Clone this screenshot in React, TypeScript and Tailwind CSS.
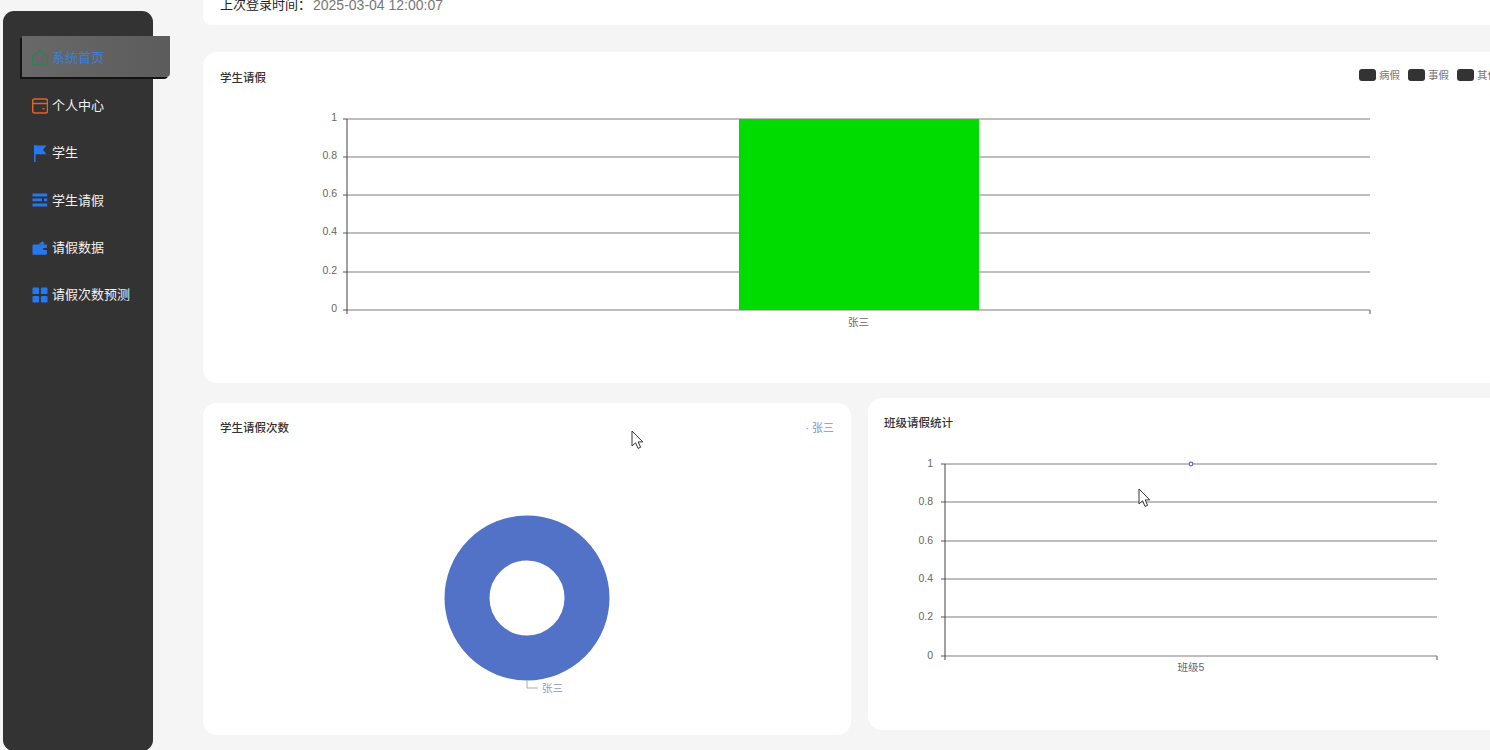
const ticks = ['1', '0.8', '0.6', '0.4', '0.2', '0']

function HouseIcon() {
  return (
    <svg width="16" height="16" viewBox="0 0 16 16" fill="none" stroke="#23884f" strokeWidth="1.2">
      <path d="M8 .8 15.2 6.2V15.2H.8V6.2Z" strokeLinejoin="round" />
      <path d="M5.5 11.5h5" />
    </svg>
  )
}

function CardIcon() {
  return (
    <svg width="16" height="16" viewBox="0 0 16 16" fill="none" stroke="#e0622c" strokeWidth="1.5">
      <rect x=".7" y="1" width="14.8" height="14" rx="2" />
      <path d="M.7 5.4h14.8M10.5 10.8h2" />
    </svg>
  )
}

function FlagIcon() {
  return (
    <svg width="16" height="17" viewBox="0 0 16 17" fill="#2678ee">
      <path d="M2 0h1.6v17H2Z" />
      <path d="M3 .5h11.5L11 4.8l3.5 4.4H3Z" />
    </svg>
  )
}

function ListIcon() {
  return (
    <svg width="16" height="14" viewBox="0 0 16 14" fill="#2678ee">
      <path d="M.5.5h14.7v3H.5ZM.5 5.6h9.5v2.6H.5ZM12 5.6h3.2v2.6H12ZM.5 10.5h14.7V13.5H.5Z" />
    </svg>
  )
}

function WalletIcon() {
  return (
    <svg width="16" height="16" viewBox="0 0 16 16" fill="#2678ee">
      <path d="M6 4.5 11 1l1.6 3.5Z" />
      <path d="M1.5 4.4h13.4v3.6h-3a1 1 0 0 0 0 2h3v3.8a1 1 0 0 1-1 1H1.5a1 1 0 0 1-1-1V5.4a1 1 0 0 1 1-1Z" />
    </svg>
  )
}

function GridIcon() {
  return (
    <svg width="16" height="16" viewBox="0 0 16 16" fill="#2678ee">
      <rect x=".5" y=".5" width="6.6" height="6.6" rx="1.2" />
      <rect x="8.9" y=".5" width="6.6" height="6.6" rx="1.2" />
      <rect x=".5" y="8.9" width="6.6" height="6.6" rx="1.2" />
      <rect x="8.9" y="8.9" width="6.6" height="6.6" rx="1.2" />
    </svg>
  )
}

const menu = [
  { label: '系统首页', icon: <HouseIcon />, active: true },
  { label: '个人中心', icon: <CardIcon /> },
  { label: '学生', icon: <FlagIcon /> },
  { label: '学生请假', icon: <ListIcon /> },
  { label: '请假数据', icon: <WalletIcon /> },
  { label: '请假次数预测', icon: <GridIcon /> },
]

function Cursor({ className }: { className: string }) {
  return (
    <svg className={className} width="13" height="20" viewBox="0 0 13 20" fill="#fff" stroke="#333" strokeWidth="1">
      <path d="M1 1v15l3.6-3.2 2.4 5.6 2.6-1.1-2.4-5.4h4.6Z" strokeLinejoin="round" />
    </svg>
  )
}

// Axis grid shared by the two cartesian charts, coordinates are in the svg's own space
function Axes({
  x0,
  x1,
  ys,
  label,
  labelGap,
  labelDy,
  nameDy,
}: {
  x0: number
  x1: number
  ys: number[]
  label: string
  labelGap: number
  labelDy: number
  nameDy: number
}) {
  const bottom = ys[ys.length - 1]
  const mid = (x0 + x1) / 2
  return (
    <g>
      {ys.map((y, i) => (
        <g key={y}>
          <line x1={x0} x2={x1} y1={y} y2={y} stroke="#a8a8a8" strokeWidth="1.5" />
          <line x1={x0 - 4} x2={x0} y1={y} y2={y} stroke="#555" />
          <text x={x0 - labelGap} y={y + labelDy} textAnchor="end" fontSize="10.5" fill="#666">
            {ticks[i]}
          </text>
        </g>
      ))}
      <line x1={x0} x2={x0} y1={ys[0]} y2={bottom + 4} stroke="#444" />
      <line x1={x1} x2={x1} y1={bottom} y2={bottom + 4} stroke="#555" />
      <text x={mid} y={bottom + nameDy} textAnchor="middle" fontSize="10.5" fill="#666">
        {label}
      </text>
    </g>
  )
}

function LegendItem({ label }: { label: string }) {
  return (
    <div className="flex items-center gap-[3px]">
      <span className="w-[17px] h-[12px] rounded-[3px] bg-[#333]" />
      <span className="w-[26px] text-[10.5px] leading-[12px] text-[#777]">{label}</span>
    </div>
  )
}

export default function App() {
  return (
    <div className="relative flex h-[750px] overflow-hidden bg-[#f5f5f5] font-['Liberation_Sans','Noto_Sans_CJK_SC',sans-serif]">
      {/* Sidebar */}
      <aside className="shrink-0 w-[150px] h-[740px] ml-[3px] mt-[11px] pt-[25px] rounded-[11px] bg-[#333]">
        <nav className="flex flex-col gap-[4.25px]">
          {menu.map((item) => (
            <div
              key={item.label}
              className={
                item.active
                  ? 'flex items-center gap-[4px] w-[148px] h-[41px] mb-[3px] ml-[19px] pl-[10px] pt-[3px] rounded-br-[4px] bg-gradient-to-r from-[#686868] to-[#5c5c5c] shadow-[-2px_2px_0_#141414] text-[13px] text-[#3b7fd8]'
                  : 'flex items-center gap-[4px] w-[150px] h-[43px] ml-[17px] pl-[12px] text-[13px] text-[#f2f2f2]'
              }
            >
              <span className="flex w-[16px] justify-center">{item.icon}</span>
              <span>{item.label}</span>
            </div>
          ))}
        </nav>
      </aside>

      {/* Main content */}
      <main className="shrink-0 w-[1300px] ml-[50px] flex flex-col">
        <div className="flex items-end h-[25px] pl-[17px] pb-[10px] bg-white rounded-b-[8px] overflow-hidden">
          <span className="text-[13px] leading-[20px] text-[#222]">上次登录时间：</span>
          <span className="ml-[2px] text-[14px] leading-[20px] text-[#777]">2025-03-04 12:00:07</span>
        </div>

        <section className="mt-[27px] h-[331px] bg-white rounded-[14px]">
          <div className="flex items-center justify-between h-[34px] pt-[16px] pl-[17px]">
            <h2 className="text-[11.5px] leading-[18px] mt-[2px] font-medium text-[#333]">学生请假</h2>
            <div className="flex gap-[3px] -mt-[4px]">
              <LegendItem label="病假" />
              <LegendItem label="事假" />
              <LegendItem label="其他" />
            </div>
          </div>
          <svg className="block" width="1300" height="297" viewBox="0 0 1300 297">
            <Axes x0={144} x1={1167} ys={[33, 71, 109, 147, 186, 224]} label="张三" labelGap={10} labelDy={2} nameDy={16} />
            <rect x="536" y="33" width="240" height="191" fill="#00dc00" />
          </svg>
        </section>

        <div className="flex items-start gap-[17px] mt-[15px]">
          <section className="shrink-0 w-[648px] h-[332px] mt-[5px] bg-white rounded-[14px]">
            <div className="flex items-center justify-between h-[48px] pt-[4px] px-[17px]">
              <h2 className="text-[11.5px] font-medium text-[#333]">学生请假次数</h2>
              <span className="-mt-[2px] text-[11px] text-[#7f93d2]">· 张三</span>
            </div>
            <svg className="block" width="648" height="284" viewBox="0 0 648 284">
              {/* svg origin is at page (203, 451) */}
              <circle cx="324" cy="147" r="60" fill="none" stroke="#5272c8" strokeWidth="45" />
              <path d="M324 230v7h11" fill="none" stroke="#aaa" />
              <text x="339" y="241" fontSize="10.5" fill="#8a9ad0">
                张三
              </text>
            </svg>
          </section>

          <section className="shrink-0 w-[635px] h-[332px] bg-white rounded-[14px]">
            <h2 className="pt-[17px] pb-[17px] pl-[16px] text-[11.5px] leading-[16px] font-medium text-[#333]">
              班级请假统计
            </h2>
            <svg className="block" width="635" height="282" viewBox="0 0 635 282">
              {/* svg origin is at page (868, 448) */}
              <Axes x0={77} x1={569} ys={[16, 54, 93, 131, 169, 208]} label="班级5" labelGap={12} labelDy={3} nameDy={15} />
              <circle cx="323" cy="16" r="1.8" fill="#fff" stroke="#5272c8" strokeWidth="1.2" />
            </svg>
          </section>
        </div>
      </main>

      {/* Mouse pointers captured in the shot */}
      <Cursor className="absolute left-[631px] top-[430px]" />
      <Cursor className="absolute left-[1138px] top-[488px]" />
    </div>
  )
}
